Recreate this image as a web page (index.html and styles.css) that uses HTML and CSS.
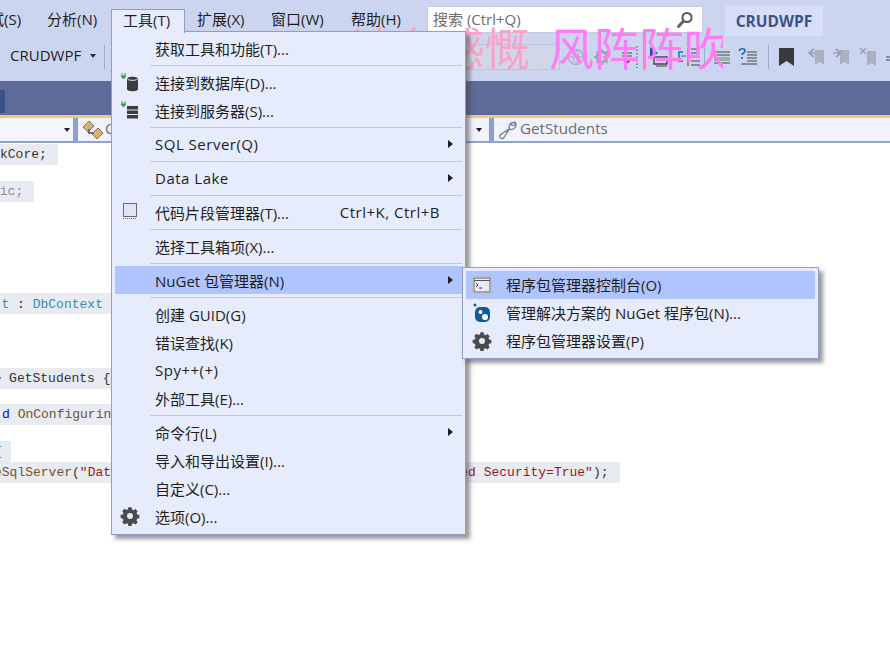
FILE: index.html
```html
<!DOCTYPE html>
<html lang="zh">
<head>
<meta charset="utf-8">
<title>CRUDWPF</title>
<link rel="stylesheet" href="styles.css">
</head>
<body>
<div class="app">
  <header class="menubar">
    <span class="mi mi-first">试(S)</span>
    <span class="mi mi-an">分析(N)</span>
    <span class="mi mi-open">工具(T)</span>
    <span class="mi mi-ext">扩展(X)</span>
    <span class="mi mi-win">窗口(W)</span>
    <span class="mi mi-help">帮助(H)</span>
    <div class="search">
      <span class="search-t">搜索 (Ctrl+Q)</span>
      <svg class="search-ico" viewBox="0 0 18 18"><circle cx="11" cy="6.500" r="4.600" fill="none" stroke="#55555c" stroke-width="2"/><path d="M7.500 10 2.500 15.500" stroke="#66635f" stroke-width="3" stroke-linecap="round"/></svg>
    </div>
    <div class="sol">CRUDWPF</div>
  </header>
  <div class="toolbar">
    <span class="tb-project">CRUDWPF</span><i class="caret tb-caret"></i>
    <i class="tb-sep"></i>
    <div class="tb-disabled"></div>
    <svg class="m7" width="18" height="22" viewBox="0 0 18 22"><circle cx="9" cy="11" r="7.500" fill="none" stroke="#a9afc0" stroke-width="1.500"/><path d="M1.500 11h15M9 3.500c-4 5-4 10 0 15M9 3.500c4 5 4 10 0 15" fill="none" stroke="#a9afc0"/></svg>
    <svg class="m9" width="16" height="22" viewBox="0 0 16 22"><circle cx="8" cy="11" r="5" fill="none" stroke="#9ea3b4" stroke-width="3"/><path d="M8 3v3M8 16v3M0 11h3M13 11h3M2.500 5.500l2 2M11.500 14.500l2 2M13.500 5.500l-2 2M4.500 14.500l-2 2" stroke="#9ea3b4" stroke-width="2"/></svg>
    <svg class="m9" width="16" height="22" viewBox="0 0 16 22"><path d="M3 7h10M3 10h10" stroke="#444"/><path d="M3 13h10l-5 5z" fill="#222"/></svg>
    <svg width="4" height="24" viewBox="0 0 4 24"><path d="M2 1v22" stroke="#444" stroke-dasharray="1.500 2"/></svg>
    <svg class="m10" width="20" height="22" viewBox="0 0 20 22"><path d="M1 1l8 6-8 5z" fill="#1b4f9c"/><path d="M5 11h13v7H5z" fill="none" stroke="#444" stroke-width="1.400"/><path d="M7 20h11" stroke="#444"/></svg>
    <svg class="m8" width="24" height="22" viewBox="0 0 24 22"><path d="M6 6H2v9h4" fill="none" stroke="#1c6fb5" stroke-width="1.500"/><path d="M4 10h5" stroke="#1c6fb5"/><path d="M11 2v18" stroke="#444"/><path d="M14 3h9M14 7h9M14 11h9M14 15h9M14 19h9" stroke="#444"/></svg>
    <i class="tb-sep2 m3"></i>
    <svg class="m8" width="18" height="22" viewBox="0 0 18 22"><path d="M1 6h16M1 9h16" stroke="#444"/><path d="M1 12h16M1 14h16" stroke="#5a9a4a"/><path d="M1 17h16" stroke="#444"/></svg>
    <svg class="m7" width="20" height="22" viewBox="0 0 20 22"><path d="M1 5c1-3 6-3 6 0 0 2-3 2-3 4M4 11v2" fill="none" stroke="#1c6fb5" stroke-width="1.700"/><path d="M9 6h10M9 9h10M9 12h10M9 15h10M3 18h16" stroke="#444"/></svg>
    <i class="tb-sep2 m10"></i>
    <svg class="m9" width="17" height="20" viewBox="0 0 17 20"><path d="M1 1h15v18l-7.500-5L1 19z" fill="#3a3a3c"/></svg>
    <svg class="m12" width="18" height="20" viewBox="0 0 18 20"><path d="M8 3h9v15l-4.500-3L8 18z" fill="#a9b0c0"/><path d="M7 2 2 6l5 4M2 6h6" fill="none" stroke="#98a0b2" stroke-width="1.700"/></svg>
    <svg class="m7" width="18" height="20" viewBox="0 0 18 20"><path d="M8 3h9v15l-4.500-3L8 18z" fill="#a9b0c0"/><path d="M4 2l5 4-5 4M1 6h7" fill="none" stroke="#98a0b2" stroke-width="1.700"/></svg>
    <svg class="m9" width="18" height="20" viewBox="0 0 18 20"><path d="M8 4h9v15l-4.500-3L8 19z" fill="#a9b0c0"/><path d="M1 1l6 6M7 1 1 7" fill="none" stroke="#98a0b2" stroke-width="1.700"/></svg>
    <svg class="m9" width="6" height="20" viewBox="0 0 6 20"><path d="M0 10h6M0 13h6" stroke="#444"/></svg>
  </div>
  <div class="tabwell"><div class="tabstub"></div></div>
  <div class="navbar">
    <div class="nav nav-a"><i class="caret caret-nav"></i></div>
    <div class="nav nav-b">
      <svg width="22" height="20" viewBox="0 0 22 20"><path d="M1 7 7 1l5 5-6 6z" fill="#d8b26c" stroke="#7d7460"/><path d="M10 14l6-6 5 5-6 6z" fill="#d8b26c" stroke="#7d7460"/><path d="M7 9v4h5" fill="none" stroke="#6b6f7c" stroke-width="2"/></svg>
      <span class="nav-t">C</span><i class="caret caret-nav caret-b"></i>
    </div>
    <div class="nav nav-c">
      <svg width="22" height="22" viewBox="0 0 22 22"><path d="M19 3.500a5 5 0 0 0-6.500 6.300L3.200 15.800a2.400 2.400 0 0 0 3.300 3.300l5.800-8.900A5 5 0 0 0 19 5l-3 1.800-1.800-.8-.2-2z" fill="#fff" stroke="#7d8595" stroke-width="1.400"/></svg>
      <span class="nav-t">GetStudents</span>
    </div>
  </div>
  <main class="code">
    <div class="ln l1"><span class="plain">kCore;</span></div>
    <div class="ln l2"><span class="gray">ric;</span></div>
    <div class="ln l3"><span class="teal">t</span> : <span class="teal">DbContext</span></div>
    <div class="ln l4">&gt; GetStudents {</div>
    <div class="ln l5"><span class="blue">d</span> <span class="brown">OnConfiguring</span></div>
    <div class="ln l6"><span class="green">{</span></div>
    <div class="ln l7"><span class="brown">eSqlServer</span>(<span class="red">"Data Source=.;Initial Catalog=Students;</span><span class="red gap">Integrated Security=True"</span>);</div>
  </main>
</div>

<div class="watermark"><span class="wm-a">诗有感慨</span> <span class="wm-b">风阵阵吹</span></div>

<nav class="menu menu-main">
  <div class="row"><span class="label">获取工具和功能(T)...</span></div>
  <hr>
  <div class="row">
    <svg class="ic" width="20" height="24" viewBox="0 0 20 24"><path d="M3 3v3M6 3v3M2 6h5L4.500 9z" stroke="#3f9a3f" fill="#3f9a3f"/><path d="M8 9c0-3 11-3 11 0v10c0 3-11 3-11 0z" fill="#3c3c3f"/><path d="M8.500 9c1 1.800 9 1.800 10 0" fill="none" stroke="#e6ecfc"/></svg>
    <span class="label">连接到数据库(D)...</span>
  </div>
  <div class="row">
    <svg class="ic" width="20" height="24" viewBox="0 0 20 24"><path d="M3 3v3M6 3v3M2 6h5L4.500 9z" stroke="#3f9a3f" fill="#3f9a3f"/><path d="M8 8h11v3.500H8zM8 12.500h11V16H8zM8 17h11v3.500H8z" fill="#3c3c3f"/></svg>
    <span class="label">连接到服务器(S)...</span>
  </div>
  <hr>
  <div class="row"><span class="label latin">SQL Server(Q)</span><i class="arrow"></i></div>
  <hr>
  <div class="row"><span class="label latin">Data Lake</span><i class="arrow"></i></div>
  <hr>
  <div class="row">
    <svg class="ic" width="20" height="22" viewBox="0 0 20 22"><rect x="4.500" y="2.500" width="13" height="13" fill="#e3e3f7" stroke="#6a6a70"/><path d="M4 17.500h14" stroke="#6a6a70" stroke-dasharray="1 1"/></svg>
    <span class="label">代码片段管理器(T)...</span><span class="key latin">Ctrl+K, Ctrl+B</span>
  </div>
  <hr>
  <div class="row"><span class="label">选择工具箱项(X)...</span></div>
  <hr>
  <div class="row row-on"><span class="label">NuGet 包管理器(N)</span><i class="arrow"></i></div>
  <hr>
  <div class="row"><span class="label">创建 GUID(G)</span></div>
  <div class="row"><span class="label">错误查找(K)</span></div>
  <div class="row"><span class="label latin">Spy++(+)</span></div>
  <div class="row"><span class="label">外部工具(E)...</span></div>
  <hr>
  <div class="row"><span class="label">命令行(L)</span><i class="arrow"></i></div>
  <div class="row"><span class="label">导入和导出设置(I)...</span></div>
  <div class="row"><span class="label">自定义(C)...</span></div>
  <div class="row">
    <svg class="ic ic-gear" width="20" height="20" viewBox="0 0 20 20"><use href="#gear"/></svg>
    <span class="label">选项(O)...</span>
  </div>
</nav>
<div class="menu-tab">工具(T)</div>

<nav class="menu menu-sub">
  <div class="row row-on">
    <svg class="ic" width="20" height="18" viewBox="0 0 20 18"><rect x=".5" y=".5" width="19" height="17" fill="#fff" stroke="#b9bccb"/><rect x="2" y="2" width="16" height="14" fill="#e9ecf8" stroke="#55555c"/><path d="M2 4.500h16" stroke="#55555c"/><path d="M4 7l2 2-2 2M7 12h3" fill="none" stroke="#333"/></svg>
    <span class="label">程序包管理器控制台(O)</span>
  </div>
  <div class="row">
    <svg class="ic" width="20" height="22" viewBox="0 0 20 22"><circle cx="3" cy="3" r="1.500" fill="#125a97"/><rect x="3" y="5" width="15" height="15" rx="5" fill="#125a97"/><circle cx="8.500" cy="10" r="2" fill="#fff"/><circle cx="13" cy="15" r="3" fill="#fff"/></svg>
    <span class="label">管理解决方案的 NuGet 程序包(N)...</span>
  </div>
  <div class="row">
    <svg class="ic" width="20" height="20" viewBox="0 0 20 20"><use href="#gear"/></svg>
    <span class="label">程序包管理器设置(P)</span>
  </div>
</nav>

<svg class="defs" width="0" height="0"><defs><g id="gear"><path d="M8.200 1h3.600l.5 2.500 1.700.7 2.100-1.400 2.500 2.500-1.400 2.100.7 1.700 2.500.5v3.600l-2.500.5-.7 1.700 1.400 2.100-2.500 2.500-2.100-1.400-1.700.7-.5 2.500H8.200l-.5-2.500-1.700-.7-2.100 1.400-2.500-2.500 1.400-2.100-.7-1.700L-.4 13V9.400l2.500-.5.700-1.700-1.400-2.100 2.500-2.500 2.100 1.400 1.700-.7z" fill="#4a4a4e" transform="translate(1 .4) scale(.9)"/><circle cx="10" cy="10" r="3" fill="#e6ecfc"/></g></defs></svg>
</body>
</html>
```
FILE: styles.css
```css
* { box-sizing: border-box; }
html, body { margin: 0; padding: 0; }
body {
  width: 890px; height: 648px; overflow: hidden; position: relative; background: #fff;
  font-family: "Open Sans", "Noto Sans CJK SC", sans-serif; font-size: 15px; color: #1e1e1e;
}
.app { display: flex; flex-direction: column; height: 648px; }
.menubar { height: 37px; background: #ccd5f0; display: flex; align-items: flex-start; position: relative; }
.mi { font-size: 15px; line-height: 20px; margin-top: 9px; white-space: nowrap; flex: none; }
.mi-first { margin-left: -11px; width: 58px; }
.mi-an { width: 76px; }
.mi-open { width: 74px; visibility: hidden; }
.mi-ext { width: 74px; }
.mi-win { width: 80px; }
.mi-help { width: 76px; }
.search {
  width: 276px; height: 27px; margin-top: 6px; background: #fff; border: 1px solid #c6cbe0;
  flex: none; display: flex; align-items: center; justify-content: space-between; padding: 0 8px 0 5px;
  font-size: 15px; color: #6d6d6d;
}
.search-t { margin-bottom: 2px; }
.search-ico { width: 18px; height: 18px; }
.sol {
  margin-left: 22px; width: 98px; height: 31px; margin-top: 5px; background: #d9def7; color: #3d5189;
  font-weight: 700; font-size: 15.500px; display: flex; align-items: center; justify-content: center; flex: none;
}
.toolbar { height: 44px; background: #ccd5f0; display: flex; align-items: center; padding: 0 0 5px 10px; overflow: hidden; }
.toolbar > * { flex: none; }
.tb-project { font-size: 15px; width: 80px; margin-bottom: 3px; }
.tb-caret { margin-bottom: 1px; }
.caret { width: 0; height: 0; border: 3.500px solid transparent; border-top: 4px solid #2a2a2a; border-bottom: 0; display: block; flex: none; }
.tb-sep { width: 1px; height: 24px; background: #9faad0; margin-left: 8px; }
.tb-disabled { margin-left: 360px; width: 95px; height: 26px; background: #d0d7e8; border: 1px solid #bcc3dc; }
.tb-sep2 { width: 1px; height: 24px; background: #9faad0; }
.m3 { margin-left: 3px; }
.m7 { margin-left: 7px; }
.m8 { margin-left: 8px; }
.m9 { margin-left: 9px; }
.m10 { margin-left: 10px; }
.m12 { margin-left: 12px; }
.tabwell { height: 34px; background: #5c6b98; display: flex; }
.tabstub { width: 5px; height: 23px; margin-top: 9px; background: #3b4f8a; }
.navbar { height: 28px; background: #8ca0ce; border-top: 3px solid #f4c77f; border-bottom: 2px solid #8ea2cf; display: flex; gap: 5px; }
.nav { background: #f0f3fd; display: flex; align-items: center; height: 100%; color: #6d6d6d; font-size: 15.200px; flex: none; }
.nav-t { margin-bottom: 3px; }
.nav-a { width: 73px; justify-content: flex-end; padding-right: 3px; background: #f4f6fe; }
.nav-b { width: 411px; padding-left: 4px; justify-content: flex-start; gap: 1px; }
.nav-c { flex: 1; padding-left: 3px; gap: 1px; }
.caret-b { margin-left: auto; margin-right: 7px; }
.caret-nav { border-top-color: #1e1e1e; }
.code { flex: 1; background: #fff; font-family: "Liberation Mono", monospace; font-size: 13px; display: flex; flex-direction: column; align-items: flex-start; color: #333; }
.ln { height: 21px; line-height: 21px; background: #e8ebf1; white-space: pre; flex: none; overflow: hidden; }
.l1 { width: 58px; margin-top: 1px; }
.l2 { width: 34px; margin-top: 16px; text-indent: -8px; }
.l3 { width: 120px; margin-top: 91px; line-height: 23px; text-indent: 1.500px; }
.l4 { width: 120px; margin-top: 54px; text-indent: -6.500px; }
.l5 { width: 120px; margin-top: 15px; text-indent: 2px; }
.l6 { width: 11px; margin-top: 16px; text-indent: -6px; }
.l7 { width: 620px; margin-top: 0; text-indent: -6px; }
.gap { margin-left: 6px; }
.gray { color: #8c8c8c; }
.teal { color: #2b91af; }
.blue { color: #0000ff; }
.brown { color: #74531f; }
.green { color: #2e7d32; }
.red { color: #a31515; }
.watermark { position: absolute; left: 350px; top: 16px; width: 373px; height: 62px; overflow: hidden; font-size: 45px; line-height: 62px; white-space: nowrap; word-spacing: 9px; font-family: "Noto Sans CJK SC", sans-serif; font-weight: 400; }
.wm-a { color: #f6a5c6; }
.wm-b { color: #ff7cf2; }
.menu { position: absolute; background: #e6ecfc; border: 1px solid #8e9fc9; box-shadow: 4px 4px 4px rgba(70,70,70,.55); font-size: 15px; }
.menu-main { left: 111px; top: 31px; width: 355px; height: 504px; padding: 2px 3px; }
.menu-sub { left: 462px; top: 267px; width: 357px; height: 92px; padding: 3px 3px; }
.menu-tab { position: absolute; left: 111px; top: 9px; width: 74px; height: 24px; background: #e6ecfc; border: 1px solid #8e9fc9; border-bottom: 0; font-size: 15px; line-height: 20px; padding-left: 11px; }
.row { height: 28px; display: flex; align-items: center; position: relative; padding-left: 40px; padding-right: 22px; white-space: nowrap; }
.menu-sub .row { padding-left: 40px; }
.menu-sub .label { margin-bottom: 2px; }
.menu-sub .ic { left: 6px; }
.row-on { background: #b0c4fd; }
.label { flex: 1; }
.key { flex: none; }
.latin { letter-spacing: .5px; }
.ic { position: absolute; left: 4px; top: 50%; transform: translateY(-50%); }
.ic-gear { left: 5px; }
hr { border: 0; border-top: 1px solid #bcc6e2; margin: 3px 0 2px 35px; height: 0; }
.arrow { position: absolute; right: 9px; top: 10px; width: 0; height: 0; border: 4px solid transparent; border-left: 5px solid #1e1e1e; border-right: 0; }
.defs { position: absolute; }
```
